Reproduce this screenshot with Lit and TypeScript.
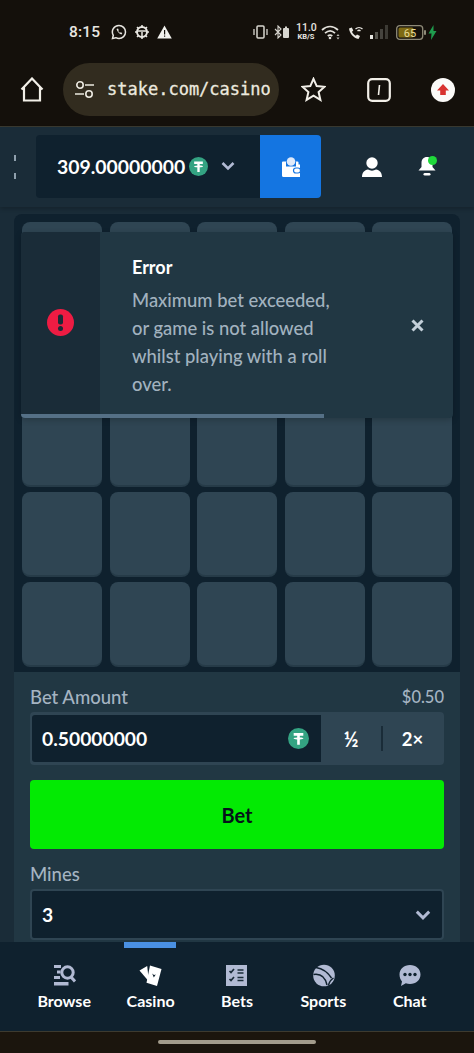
import { LitElement, html, css, svg } from "lit";
import { customElement } from "lit/decorators.js";

const tether = (size: number) => html`<svg width=${size} height=${size} viewBox="0 0 24 24">
  <circle cx="12" cy="12" r="12" fill="#34a382"/>
  <path d="M6.500 5.800h11v3h-4v2c2.300.1 4.200.6 4.200 1.100s-1.900 1-4.200 1.100V19h-3v-5.900c-2.300-.1-4.200-.6-4.200-1.100s1.900-1 4.200-1.100v-2h-4z" fill="#fff"/>
</svg>`;

const chevron = (size: number, color: string) => html`<svg width=${size} height=${size} viewBox="0 0 16 16">
  <path d="M2.500 5l5.500 5.500L13.500 5" fill="none" stroke=${color} stroke-width="2.600"/>
</svg>`;

const navIcons: Record<string, unknown> = {
  Browse: svg`<path d="M1 1h7v3H1zM4 6.500h3.500v3H4zM1 12h6v3H1zM1 18h14.500v3.500H1z" fill="#b1bad3"/><circle cx="14.500" cy="8.500" r="5.700" fill="none" stroke="#b1bad3" stroke-width="3"/><path d="M18 13l4 4.500" stroke="#b1bad3" stroke-width="3"/>`,
  Casino: svg`<path d="M.5 6.500L8.200 2l1.700 15.500z" fill="#fff"/><path d="M11 1.500l11.500 3.500-4.500 17L7.500 18.800z" fill="#fff"/><path d="M13.200 9.500l1.800 1.400 1.800-.5-2 3.200z" fill="#0f212e"/>`,
  Bets: svg`<path d="M1 1h21v21H1z" fill="#b1bad3"/><path d="M4.500 7l1.500 1.500L9 5M4.500 15L6 16.500l3-3.500" fill="none" stroke="#1a2c38" stroke-width="1.700"/><path d="M12.500 6h6M12.500 9h6M12.500 13.500h6M12.500 16.500h6" stroke="#1a2c38" stroke-width="1.500"/>`,
  Sports: svg`<circle cx="12" cy="11.500" r="10.800" fill="#b1bad3"/><path d="M4 3.500c6 1 12 5 15.500 10.500M1.500 10.500C8 9.500 13 12 15 21M16.500 21.500c.5-3 2-5.500 5-7.500" fill="none" stroke="#0f212e" stroke-width="1.500"/>`,
  Chat: svg`<path d="M12 1c6 0 10.500 4 10.500 9.500S18 20 12 20c-1.500 0-3-.3-4.200-.8L3 22l1-4.500C2.500 15.800 1.500 13.300 1.500 10.500 1.500 5 6 1 12 1z" fill="#b1bad3"/><circle cx="7" cy="10.500" r="1.700" fill="#0f212e"/><circle cx="12" cy="10.500" r="1.700" fill="#0f212e"/><circle cx="17" cy="10.500" r="1.700" fill="#0f212e"/>`,
};

@customElement("app-root")
export class AppRoot extends LitElement {
  static styles = css`
    :host { display: block; width: 474px; height: 1053px; overflow: hidden; background: #1a2c38; font-family: Lato, "Noto Sans", sans-serif; }
    .app { display: flex; flex-direction: column; height: 1053px; }
    svg { display: block; flex: none; }

    .status { height: 46px; flex: none; box-sizing: border-box; padding: 18px 37px 0 69px; display: flex; justify-content: space-between; align-items: flex-start; background: #14100b; color: #e8e6e1; }
    .status-side { display: flex; align-items: center; height: 28px; }
    .time { font: 500 15.500px Roboto, sans-serif; margin-right: 11px; letter-spacing: .2px; }
    .speed { font: 700 7.500px/8px Roboto, sans-serif; text-align: center; width: 20px; margin: 0 5px 0 6px; }
    .speed b { font-size: 10.500px; font-weight: 500; display: block; line-height: 10px; }

    .browser { height: 81px; flex: none; box-sizing: border-box; padding: 17px 19px 10px 20px; display: flex; align-items: center; background: #14100b; border-bottom: 1px solid #3a3a30; }
    .pill { width: 216px; height: 53px; margin: 0 22px 0 19px; box-sizing: border-box; padding: 0 9px 0 12px; border-radius: 27px; background: #322c1f; display: flex; align-items: center; gap: 13px; overflow: hidden; flex: none; }
    .url { font: 17px/1.200 "DejaVu Sans Mono", monospace; color: #ece9df; white-space: nowrap; overflow: hidden; width: 163px; -webkit-text-stroke: .3px #ece9df; }
    .star { margin-right: 41px; }
    .tab { margin-right: 40px; }

    .header { height: 80px; flex: none; box-sizing: border-box; padding: 8px 0 9px 14px; display: flex; align-items: stretch; background: #1a2c38; box-shadow: 0 2px 4px rgba(0,0,0,.2); position: relative; }
    .marks { width: 2px; display: flex; flex-direction: column; justify-content: center; gap: 12px; margin-right: 20px; }
    .marks i { height: 6px; background: #8fa0ad; display: block; }
    .balance { width: 224px; flex: none; background: #0f212e; border-radius: 4px 0 0 4px; display: flex; align-items: center; box-sizing: border-box; padding: 0 0 1px 21px; color: #fff; font-size: 19.400px; font-weight: 700; }
    .balance .amount { margin-right: 4px; }
    .balance .chev { margin-left: 12px; }
    .wallet { width: 61px; flex: none; background: #1475e1; border-radius: 0 4px 4px 0; display: flex; align-items: center; justify-content: center; }
    .user { margin-left: 41px; align-self: center; }
    .bell-wrap { margin-left: 36px; align-self: center; position: relative; }
    .dot { position: absolute; top: 0; right: -1px; width: 9px; height: 9px; border-radius: 50%; background: #1fd83a; }

    .main { flex: 1; min-height: 0; box-sizing: border-box; padding: 7px 14px 0; display: flex; flex-direction: column; }
    .game { position: relative; height: 458px; flex: none; box-sizing: border-box; padding: 8px; background: #0f212e; border-radius: 8px 8px 0 0; display: grid; grid-template-columns: repeat(5, 1fr); grid-auto-rows: 83px; gap: 7px 7.500px; }
    .tile { background: #2f4553; border-radius: 8px; box-shadow: 0 2px 0 #263b48; }

    .toast { position: absolute; left: 7px; top: 18px; width: 432px; height: 186px; background: #213743; border-radius: 4px; display: flex; overflow: hidden; box-shadow: 0 2px 6px rgba(0,0,0,.2); }
    .toast-icon { width: 79px; flex: none; background: #1a2c38; display: flex; align-items: center; justify-content: center; padding-bottom: 5px; box-sizing: border-box; }
    .toast-body { flex: 1; padding: 25px 0 0 32px; }
    .toast-title { color: #fff; font-size: 18px; font-weight: 700; line-height: 20px; margin-bottom: 9px; }
    .toast-text { color: #a2b2bf; font-size: 18.400px; line-height: 28px; width: 205px; font-weight: 500; }
    .toast-close { width: 71px; flex: none; display: flex; align-items: center; justify-content: center; box-sizing: border-box; }
    .progress { position: absolute; left: 0; bottom: 0; width: 303px; height: 4px; background: #557086; }

    .controls { flex: 1; min-height: 0; box-sizing: border-box; padding: 15px 16px 0; background: #213743; }
    .label-row { display: flex; justify-content: space-between; align-items: center; height: 20px; font-size: 18.500px; font-weight: 500; margin-bottom: 5px; }
    .label-row span { color: #a5b4c2; }
    .label-row .usd { font-size: 16.500px; }
    .bet-input { display: flex; height: 53px; background: #2f4553; border-radius: 4px; box-sizing: border-box; padding: 3px 2px; }
    .field { width: 289px; flex: none; background: #0f212e; border-radius: 3px 0 0 3px; display: flex; align-items: center; justify-content: space-between; box-sizing: border-box; padding: 0 12px 0 10px; color: #fff; font-size: 19.300px; font-weight: 700; }
    .half, .double { display: flex; align-items: center; justify-content: center; color: #fff; font-weight: 700; }
    .half { width: 60px; font-size: 20px; }
    .double { flex: 1; font-size: 18.500px; }
    .sep { width: 2px; height: 25px; background: #1a2c38; align-self: center; }
    .bet-btn { margin-top: 15px; height: 69px; border-radius: 4px; background: #03ea03; color: #05121a; display: flex; align-items: center; justify-content: center; font-size: 20px; font-weight: 700; }
    .mines-label { margin-top: 15px; margin-bottom: 5px; }
    .select { height: 51px; background: #0f212e; border: 2px solid #2f4553; border-radius: 4px; box-sizing: border-box; display: flex; align-items: center; justify-content: space-between; padding: 0 10px; color: #fff; font-size: 19.300px; font-weight: 700; }

    .nav { height: 90px; flex: none; background: #0f212e; display: grid; grid-template-columns: repeat(5, 1fr); padding: 0 21px; box-sizing: border-box; position: relative; border-bottom: 1px solid #3d3a2f; }
    .nav-item { display: flex; flex-direction: column; align-items: center; padding-top: 22px; box-sizing: border-box; color: #fff; font-size: 16px; font-weight: 700; gap: 5px; line-height: 18px; position: relative; }
    .indicator { position: absolute; top: 0; left: 124px; width: 52px; height: 6px; background: #4a90e2; }

    .home { height: 21px; flex: none; background: #1b150d; display: flex; justify-content: center; padding-top: 8px; box-sizing: border-box; }
    .home i { width: 158px; height: 4px; border-radius: 2px; background: #a39c8c; display: block; }
  `;

  render() {
    const tiles = Array.from({ length: 25 });
    return html`<div class="app">
      <div class="status">
        <div class="status-side">
          <span class="time">8:15</span>
          <svg width="16" height="16" viewBox="0 0 16 16" style="margin-right:7px"><path d="M8 1.500a6.500 6.500 0 0 1 0 13c-1.200 0-2.200-.3-3.200-.8L1.500 14.500l.8-3.200A6.500 6.500 0 0 1 8 1.500z" fill="none" stroke="#e8e6e1" stroke-width="1.500"/><path d="M5.500 5c1 3 2.500 4.500 5 5.500l.8-1.500-1.600-.8-.7.600c-.8-.4-1.400-1-1.800-1.800l.6-.7L7 4.500z" fill="#e8e6e1"/></svg>
          <svg width="16" height="16" viewBox="0 0 16 16" style="margin-right:7px"><circle cx="8" cy="8" r="5" fill="none" stroke="#e8e6e1" stroke-width="2"/><path d="M8 1v3M8 12v3M1 8h3M12 8h3M3 3l2 2M11 11l2 2M13 3l-2 2M5 11l-2 2M4 7h8M8 8v4" stroke="#e8e6e1" stroke-width="1.500"/></svg>
          <svg width="15" height="14" viewBox="0 0 15 14"><path d="M7.500.5L14.800 13.500H.2z" fill="#f2f2ee"/><path d="M7 5h1.200v4.500H7zM7 10.500h1.200v1.200H7z" fill="#14100b"/></svg>
        </div>
        <div class="status-side">
          <svg width="15" height="14" viewBox="0 0 15 14" style="margin-right:6px"><rect x="4" y="1" width="7" height="12" rx="1" fill="none" stroke="#d8d6d0" stroke-width="1.500"/><path d="M1 4v6M14 4v6" stroke="#d8d6d0" stroke-width="1.300"/></svg>
          <svg width="16" height="14" viewBox="0 0 16 14"><path d="M1 4l6 6-3 3V1l3 3-6 6" fill="none" stroke="#d8d6d0" stroke-width="1.100"/><rect x="9" y="3" width="6" height="10" rx="1" fill="#d8d6d0"/><rect x="11" y="1.500" width="2" height="2" fill="#d8d6d0"/></svg>
          <div class="speed"><b>11.0</b>KB/S</div>
          <svg width="20" height="15" viewBox="0 0 20 15" style="margin-right:7px"><path d="M1 5c5-4.500 11-4.500 16 0M4 8.200c3.300-3 7-3 10 0M6.800 11c1.500-1.300 3-1.300 4.500 0" fill="none" stroke="#e2e0da" stroke-width="1.700"/><circle cx="9" cy="13" r="1.300" fill="#e2e0da"/><path d="M17 9l1.500 2h-3zM17 14.500L15.500 12.500h3z" fill="#bdbbb5"/></svg>
          <svg width="15" height="15" viewBox="0 0 15 15" style="margin-right:7px"><path d="M1 3.500c.5 5 4.500 9.500 9.500 10.500l1.500-3-3-1.500-1.200 1.200C6 9.800 4.700 8.500 4 6.700l1.300-1.200L3.800 2.500z" fill="#e8e6e1"/><path d="M7.500 4c2-2 5-2 7 0M9.500 6c1-1 2-1 3 0" fill="none" stroke="#e8e6e1" stroke-width="1.200"/></svg>
          <svg width="19" height="14" viewBox="0 0 19 14" style="margin-right:7px"><rect x="0" y="10" width="3" height="4" fill="#e8e6e1"/><rect x="5" y="7" width="3" height="7" fill="#56544d"/><rect x="10" y="4" width="3" height="10" fill="#46443e"/><rect x="15" y="0" width="3" height="14" fill="#3c3a34"/></svg>
          <svg width="30" height="15" viewBox="0 0 30 15"><rect x=".7" y=".7" width="26" height="13.600" rx="3" fill="none" stroke="#8e8a78" stroke-width="1.300"/><rect x="2.500" y="2.500" width="15" height="10" rx="1.500" fill="#7e6a14"/><rect x="28" y="5" width="2" height="5" rx="1" fill="#8e8a78"/><text x="14" y="11.500" text-anchor="middle" font-family="Roboto, sans-serif" font-size="11" fill="#e9dc96">65</text></svg>
          <svg width="9" height="15" viewBox="0 0 9 15" style="margin-left:2px"><path d="M5.500 0L.5 8.500h3L3 15l5.500-9h-3z" fill="#1f9d4e"/></svg>
        </div>
      </div>

      <div class="browser">
        <svg width="24" height="25" viewBox="0 0 24 25"><path d="M1.500 12.500L12 1.500l10.500 11M4 10.500V23.500h16V10.500" fill="none" stroke="#f2efe8" stroke-width="2.200"/></svg>
        <div class="pill">
          <svg width="19" height="17" viewBox="0 0 19 17" style="flex:none"><circle cx="5" cy="4" r="3.200" fill="none" stroke="#ece9e0" stroke-width="1.600"/><path d="M10 4h9M0 13h9" stroke="#ece9e0" stroke-width="1.700"/><circle cx="14" cy="13" r="3.200" fill="none" stroke="#ece9e0" stroke-width="1.600"/></svg>
          <span class="url">stake.com/casino</span>
        </div>
        <svg class="star" width="25" height="25" viewBox="0 0 25 25"><path d="M12.500 1.800l3.200 7.300 7.800.7-5.900 5.200 1.800 7.800-6.900-4.200-6.900 4.200 1.800-7.800L1.500 9.800l7.800-.7z" fill="none" stroke="#f2efe8" stroke-width="2"/></svg>
        <svg class="tab" width="24" height="24" viewBox="0 0 24 24"><rect x="1.200" y="1.200" width="21.600" height="21.600" rx="4" fill="none" stroke="#f2efe8" stroke-width="2.200"/><path d="M12.500 7l-1 10" stroke="#f2efe8" stroke-width="1.600"/></svg>
        <svg width="24" height="24" viewBox="0 0 24 24"><circle cx="12" cy="12" r="12" fill="#fbfaf8"/><path d="M12 6l6 6.500h-3.200V17H9.200v-4.500H6z" fill="#d8322f"/></svg>
      </div>

      <div class="header">
        <div class="marks"><i></i><i></i></div>
        <div class="balance">
          <span class="amount">309.00000000</span>
          ${tether(19)}
          <span class="chev">${chevron(16, "#b1bad3")}</span>
        </div>
        <div class="wallet">
          <svg width="20" height="20" viewBox="0 0 20 20">
            <path d="M1 5.500a1 1 0 0 1 1-1h3V9.500h10V4.500h1.500a1 1 0 0 1 1 1v2H19V20H2.500A1.500 1.500 0 0 1 1 18.500z" fill="#fff"/>
            <circle cx="10" cy="4.500" r="4.300" fill="#dfeafa"/>
            <rect x="12.500" y="11" width="7" height="5" rx="2.500" fill="#fff" stroke="#1475e1" stroke-width="1.200"/>
          </svg>
        </div>
        <svg class="user" width="20" height="20" viewBox="0 0 20 20"><circle cx="10" cy="6" r="5.700" fill="#fff"/><path d="M0 20c0-4.500 2.500-7 6-7.500 2.500 1.500 5.500 1.500 8 0 3.500.5 6 3 6 7.500z" fill="#fff"/></svg>
        <div class="bell-wrap">
          <svg width="18" height="21" viewBox="0 0 18 21"><path d="M9 1c3.500 0 5.500 2.500 5.500 6v4l3 3.500H.5l3-3.500V7C3.500 3.500 5.500 1 9 1z" fill="#fff"/><rect x="5.500" y="17" width="7" height="2.600" rx="1.300" fill="#fff"/></svg>
          <i class="dot"></i>
        </div>
      </div>

      <div class="main">
        <div class="game">
          ${tiles.map(() => html`<div class="tile"></div>`)}
          <div class="toast">
            <div class="toast-icon">
              <svg width="27" height="27" viewBox="0 0 27 27"><circle cx="13.500" cy="13.500" r="13.500" fill="#ed1c43"/><rect x="11" y="5.500" width="5" height="10" rx="2" fill="#1a2c38"/><circle cx="13.500" cy="19.500" r="2.500" fill="#1a2c38"/></svg>
            </div>
            <div class="toast-body">
              <div class="toast-title">Error</div>
              <div class="toast-text">Maximum bet exceeded, or game is not allowed whilst playing with a roll over.</div>
            </div>
            <div class="toast-close">
              <svg width="13" height="13" viewBox="0 0 13 13"><path d="M1.500 1.500l10 10M11.500 1.500l-10 10" stroke="#c4d0da" stroke-width="3"/></svg>
            </div>
            <div class="progress"></div>
          </div>
        </div>
        <div class="controls">
          <div class="label-row"><span>Bet Amount</span><span class="usd">$0.50</span></div>
          <div class="bet-input">
            <div class="field"><span>0.50000000</span>${tether(21)}</div>
            <div class="half">½</div>
            <div class="sep"></div>
            <div class="double">2×</div>
          </div>
          <div class="bet-btn">Bet</div>
          <div class="label-row mines-label"><span>Mines</span></div>
          <div class="select"><span>3</span>${chevron(18, "#b1bad3")}</div>
        </div>
      </div>

      <div class="nav">
        ${["Browse", "Casino", "Bets", "Sports", "Chat"].map(
          (n) => html`<div class="nav-item"><svg width="23" height="23" viewBox="0 0 23 23">${navIcons[n]}</svg><span>${n}</span></div>`
        )}
        <i class="indicator"></i>
      </div>
      <div class="home"><i></i></div>
    </div>`;
  }
}
